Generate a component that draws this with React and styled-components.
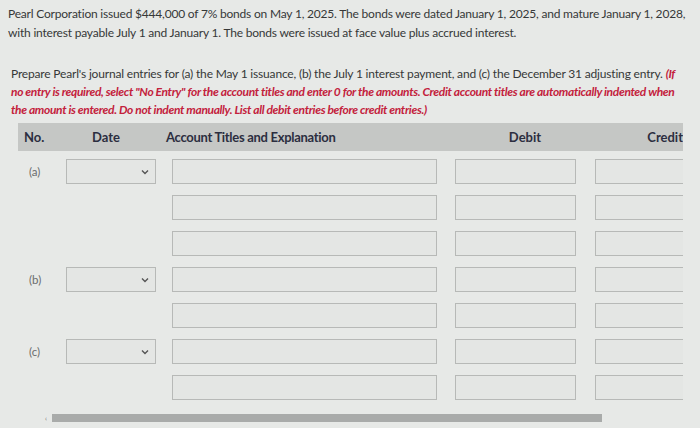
import React from 'react';
import styled, { createGlobalStyle } from 'styled-components';

const GlobalStyle = createGlobalStyle`
  html, body {
    margin: 0;
    padding: 0;
    background: #e7e9e7;
  }
  body {
    font-family: Lato, "Open Sans", sans-serif;
    color: #363838;
  }
`;

const Page = styled.div`
  width: 700px;
  height: 428px;
  overflow: hidden;
  padding: 4px 0 0 8px;
  box-sizing: border-box;
`;

const Problem = styled.p`
  margin: 0;
  font-size: 12px;
  letter-spacing: -0.2px;
  line-height: 19px;
  white-space: nowrap;
`;

const Instructions = styled.p`
  margin: 23px 0 0 3px;
  font-size: 12px;
  letter-spacing: -0.18px;
  line-height: 18px;
  white-space: nowrap;
`;

const Note = styled.em`
  color: #c3213c;
  font-weight: 700;
  font-style: italic;
  letter-spacing: -0.35px;
`;

const TableBox = styled.div`
  width: 665px;
  margin: 4px 0 0 10px;
  overflow: hidden;
`;

const HeaderBar = styled.div`
  display: grid;
  grid-template-columns: 48px 106px 283px 140px 88px;
  align-items: center;
  height: 28px;
  background: #c5c7c5;
  font-weight: 700;
  font-size: 13px;
  color: #2c2e40;
`;

const HeadCell = styled.div`
  padding-left: ${p => p.$pad || 0}px;
  margin-left: ${p => p.$shift || 0}px;
  text-align: ${p => p.$align || 'left'};
  letter-spacing: ${p => (p.$tight ? '-0.3px' : '0')};
  white-space: nowrap;
`;

const Body = styled.div`
  padding-top: 8px;
`;

const Row = styled.div`
  display: grid;
  grid-template-columns: 48px 106px 283px 140px 88px;
  align-items: start;
  height: 36px;
`;

const Label = styled.div`
  font-size: 11.5px;
  color: #6a6c6c;
  padding: 6px 0 0 11px;
`;

const Field = styled.div`
  width: ${p => p.$w}px;
  height: 25px;
  box-sizing: border-box;
  border: 1px solid #b7b9b7;
  background: #e4e6e4;
`;

const Select = styled(Field)`
  display: flex;
  align-items: center;
  justify-content: flex-end;
  padding-right: 6px;
  color: #555;
`;

const ScrollRow = styled.div`
  display: flex;
  align-items: center;
  height: 10px;
  margin-top: 2px;
`;

const Arrow = styled.div`
  width: 8px;
  margin-left: 24px;
  font-size: 7px;
  color: #777;
  text-align: center;
`;

const Thumb = styled.div`
  width: 550px;
  height: 8px;
  background: #a9abaa;
  margin-left: 2px;
`;

const Chevron = () => (
  <svg width="8" height="6" viewBox="0 0 8 6">
    <path d="M1 1.5 L4 4.5 L7 1.5" fill="none" stroke="#555" strokeWidth="1.4" />
  </svg>
);

const rows = [
  { label: '(a)', date: true },
  {},
  {},
  { label: '(b)', date: true },
  {},
  { label: '(c)', date: true },
  {},
];

export default function App() {
  return (
    <Page>
      <GlobalStyle />
      <Problem>
        Pearl Corporation issued $444,000 of 7% bonds on May 1, 2025. The bonds were dated January 1, 2025, and mature January 1, 2028,
        <br />
        with interest payable July 1 and January 1. The bonds were issued at face value plus accrued interest.
      </Problem>
      <Instructions>
        Prepare Pearl's journal entries for (a) the May 1 issuance, (b) the July 1 interest payment, and (c) the December 31 adjusting entry. <Note>(If</Note>
        <br />
        <Note>no entry is required, select "No Entry" for the account titles and enter 0 for the amounts. Credit account titles are automatically indented when</Note>
        <br />
        <Note>the amount is entered. Do not indent manually. List all debit entries before credit entries.)</Note>
      </Instructions>
      <TableBox>
        <HeaderBar>
          <HeadCell $pad={6}>No.</HeadCell>
          <HeadCell $pad={26}>Date</HeadCell>
          <HeadCell $shift={-6} $tight>Account Titles and Explanation</HeadCell>
          <HeadCell $align="center">Debit</HeadCell>
          <HeadCell $align="right">Credit</HeadCell>
        </HeaderBar>
        <Body>
          {rows.map((r, i) => (
            <Row key={i}>
              <Label>{r.label || ''}</Label>
              <div>
                {r.date && (
                  <Select $w={90}>
                    <Chevron />
                  </Select>
                )}
              </div>
              <Field $w={265} />
              <Field $w={121} />
              <Field $w={100} />
            </Row>
          ))}
          <ScrollRow>
            <Arrow>‹</Arrow>
            <Thumb />
          </ScrollRow>
        </Body>
      </TableBox>
    </Page>
  );
}
